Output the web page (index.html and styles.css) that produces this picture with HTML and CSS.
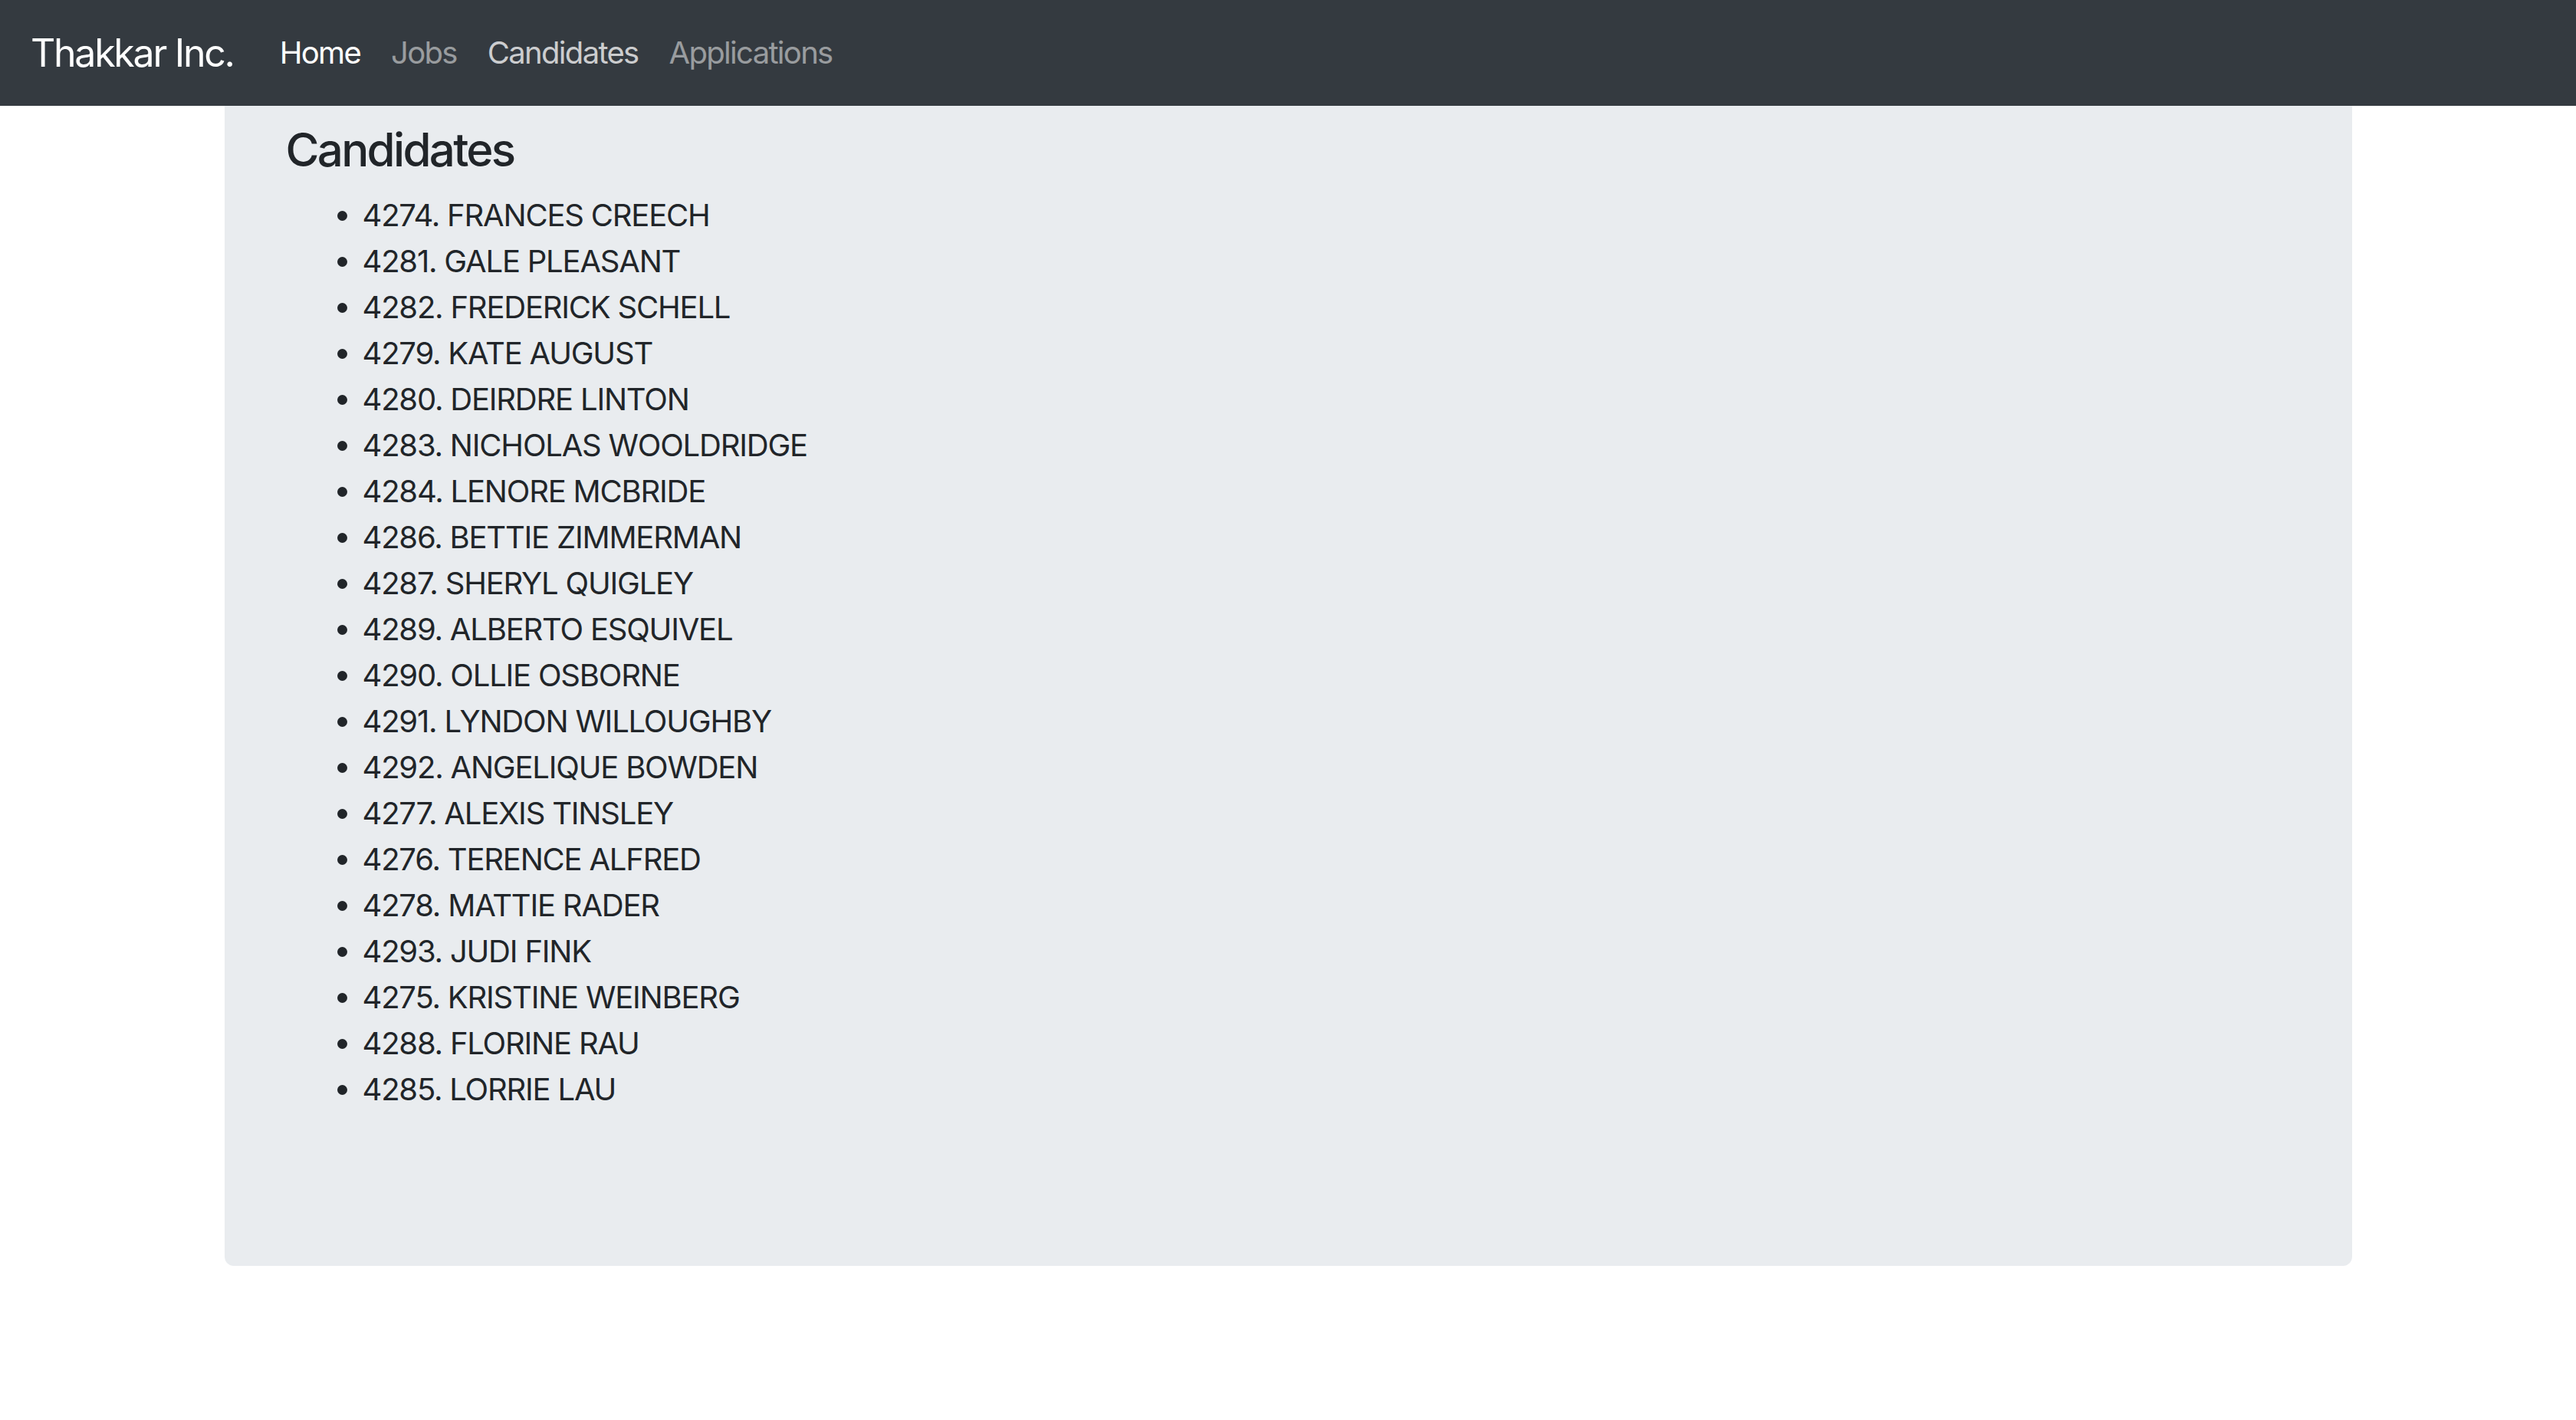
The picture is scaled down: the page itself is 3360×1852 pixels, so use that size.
FILE: index.html
```html
<!DOCTYPE html>
<html lang="en">
<head>
  <meta charset="UTF-8" />
  <meta name="viewport" content="width=device-width, initial-scale=1.0" />
  <title>Candidates</title>
  <link rel="stylesheet" href="styles.css">
</head>
<body>
  <nav class="navbar">
    <a class="navbar-brand" href="#">Thakkar Inc.</a>
    <ul class="navbar-nav">
      <li><a class="nav-link active" href="#">Home</a></li>
      <li><a class="nav-link" href="#">Jobs</a></li>
      <li><a class="nav-link hover" href="#">Candidates</a></li>
      <li><a class="nav-link" href="#">Applications</a></li>
    </ul>
  </nav>

  <div class="container">
    <div class="jumbotron">
      <h4>Candidates</h4>
      <ul class="candidate-list">
        <li>4274. FRANCES CREECH</li>
        <li>4281. GALE PLEASANT</li>
        <li>4282. FREDERICK SCHELL</li>
        <li>4279. KATE AUGUST</li>
        <li>4280. DEIRDRE LINTON</li>
        <li>4283. NICHOLAS WOOLDRIDGE</li>
        <li>4284. LENORE MCBRIDE</li>
        <li>4286. BETTIE ZIMMERMAN</li>
        <li>4287. SHERYL QUIGLEY</li>
        <li>4289. ALBERTO ESQUIVEL</li>
        <li>4290. OLLIE OSBORNE</li>
        <li>4291. LYNDON WILLOUGHBY</li>
        <li>4292. ANGELIQUE BOWDEN</li>
        <li>4277. ALEXIS TINSLEY</li>
        <li>4276. TERENCE ALFRED</li>
        <li>4278. MATTIE RADER</li>
        <li>4293. JUDI FINK</li>
        <li>4275. KRISTINE WEINBERG</li>
        <li>4288. FLORINE RAU</li>
        <li>4285. LORRIE LAU</li>
      </ul>
    </div>
  </div>
</body>
</html>
```

FILE: styles.css
```css
html {
  font-size: 40px;
}

* {
  box-sizing: border-box;
}

body {
  font-family: Inter, "Liberation Sans", Arial, sans-serif;
  font-size: 1rem;
  line-height: 1.5;
  letter-spacing: -0.03em;
  color: #212529;
  background-color: #fff;
  margin: 0;
}

.navbar {
  display: flex;
  align-items: center;
  background-color: #343a40;
  padding: 0.5rem 1rem;
  height: 138px;
}

.navbar-brand {
  font-size: 1.25rem;
  letter-spacing: -0.045em;
  color: #fff;
  text-decoration: none;
  margin-right: 1rem;
  padding: 0.3125rem 0;
  line-height: 1.5;
}

.navbar-nav {
  display: flex;
  list-style: none;
  margin: 0;
  padding: 0;
}

.nav-link {
  display: block;
  padding: 0.5rem;
  letter-spacing: -0.042em;
  color: rgba(255, 255, 255, 0.5);
  text-decoration: none;
}

.nav-link.active {
  color: #fff;
}

.nav-link.hover,
.nav-link:hover {
  color: rgba(255, 255, 255, 0.75);
}

.container {
  max-width: 2850px;
  margin: 0 auto;
  padding: 0 37.5px;
}

.jumbotron {
  background-color: #e9ecef;
  border-radius: 0 0 12px 12px;
  padding: 21px 2rem 4rem;
}

h4 {
  font-size: 1.5rem;
  font-weight: 500;
  letter-spacing: -0.045em;
  line-height: 1.2;
  margin: 0 0 0.5rem;
}

.candidate-list {
  margin: 0 0 1rem;
  padding-left: 2.5rem;
}
```
